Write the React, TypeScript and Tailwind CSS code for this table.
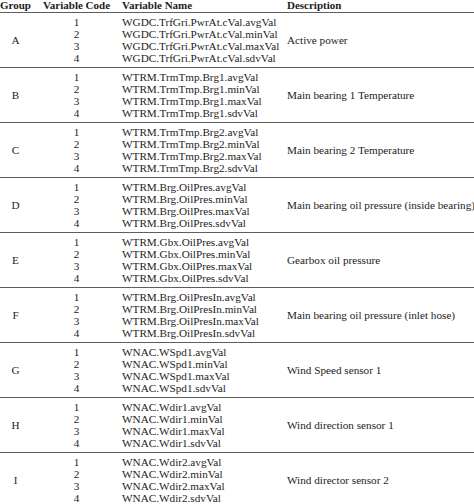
const groups = [
  { id: "A", prefix: "WGDC.TrfGri.PwrAt.cVal", desc: "Active power" },
  { id: "B", prefix: "WTRM.TrmTmp.Brg1", desc: "Main bearing 1 Temperature" },
  { id: "C", prefix: "WTRM.TrmTmp.Brg2", desc: "Main bearing 2 Temperature" },
  { id: "D", prefix: "WTRM.Brg.OilPres", desc: "Main bearing oil pressure (inside bearing)" },
  { id: "E", prefix: "WTRM.Gbx.OilPres", desc: "Gearbox oil pressure" },
  { id: "F", prefix: "WTRM.Brg.OilPresIn", desc: "Main bearing oil pressure (inlet hose)" },
  { id: "G", prefix: "WNAC.WSpd1", desc: "Wind Speed sensor 1" },
  { id: "H", prefix: "WNAC.Wdir1", desc: "Wind direction sensor 1" },
  { id: "I", prefix: "WNAC.Wdir2", desc: "Wind director sensor 2" },
];

const stats = ["avgVal", "minVal", "maxVal", "sdvVal"];

export default function App() {
  return (
    <div className="w-[474px] h-[504px] overflow-hidden bg-white text-[#1c1c1c] font-['Liberation_Serif','Times_New_Roman',serif]">
      {/* header */}
      <div className="grid grid-cols-[31px_91px_165px_1fr] h-[13px] text-[11px] leading-[11px] font-bold border-b border-[#5e5e5e] whitespace-nowrap">
        <div className="text-center">Group</div>
        <div className="text-center">Variable Code</div>
        <div>Variable Name</div>
        <div>Description</div>
      </div>

      {groups.map((g) => (
        <div
          key={g.id}
          className="grid grid-cols-[31px_91px_165px_1fr] h-[55px] py-[3px] border-b border-[#5e5e5e] text-[11.2px] leading-[12px] whitespace-nowrap"
        >
          <div className="flex items-center justify-center">{g.id}</div>
          <div className="flex flex-col items-center">
            {stats.map((_, i) => (
              <div key={i}>{i + 1}</div>
            ))}
          </div>
          <div className="flex flex-col">
            {stats.map((s) => (
              <div key={s}>
                {g.prefix}.{s}
              </div>
            ))}
          </div>
          <div className="flex items-center">{g.desc}</div>
        </div>
      ))}
    </div>
  );
}
